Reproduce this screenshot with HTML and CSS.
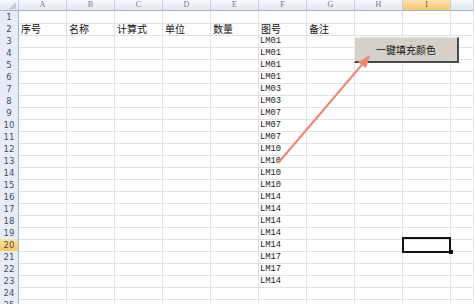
FILE: index.html
```html
<!DOCTYPE html>
<html lang="zh">
<head>
<meta charset="utf-8">
<title>Sheet</title>
<link rel="stylesheet" href="styles.css">
</head>
<body>
<div class="sheet">
  <div class="row head">
    <div class="corner"><span class="tri"></span></div><div>A</div><div>B</div><div>C</div><div>D</div><div>E</div><div>F</div><div>G</div><div>H</div><div class="sel">I</div><div></div>
  </div>
  <div class="row"><div class="rh">1</div><div></div><div></div><div></div><div></div><div></div><div></div><div></div><div></div><div></div><div></div></div>
  <div class="row"><div class="rh">2</div><div class="zh">序号</div><div class="zh">名称</div><div class="zh">计算式</div><div class="zh">单位</div><div class="zh">数量</div><div class="zh">图号</div><div class="zh">备注</div><div></div><div></div><div></div></div>
  <div class="row"><div class="rh">3</div><div></div><div></div><div></div><div></div><div></div><div class="m">LM01</div><div></div><div></div><div></div><div></div></div>
  <div class="row"><div class="rh">4</div><div></div><div></div><div></div><div></div><div></div><div class="m">LM01</div><div></div><div></div><div></div><div></div></div>
  <div class="row"><div class="rh">5</div><div></div><div></div><div></div><div></div><div></div><div class="m">LM01</div><div></div><div></div><div></div><div></div></div>
  <div class="row"><div class="rh">6</div><div></div><div></div><div></div><div></div><div></div><div class="m">LM01</div><div></div><div></div><div></div><div></div></div>
  <div class="row"><div class="rh">7</div><div></div><div></div><div></div><div></div><div></div><div class="m">LM03</div><div></div><div></div><div></div><div></div></div>
  <div class="row"><div class="rh">8</div><div></div><div></div><div></div><div></div><div></div><div class="m">LM03</div><div></div><div></div><div></div><div></div></div>
  <div class="row"><div class="rh">9</div><div></div><div></div><div></div><div></div><div></div><div class="m">LM07</div><div></div><div></div><div></div><div></div></div>
  <div class="row"><div class="rh">10</div><div></div><div></div><div></div><div></div><div></div><div class="m">LM07</div><div></div><div></div><div></div><div></div></div>
  <div class="row"><div class="rh">11</div><div></div><div></div><div></div><div></div><div></div><div class="m">LM07</div><div></div><div></div><div></div><div></div></div>
  <div class="row"><div class="rh">12</div><div></div><div></div><div></div><div></div><div></div><div class="m">LM10</div><div></div><div></div><div></div><div></div></div>
  <div class="row"><div class="rh">13</div><div></div><div></div><div></div><div></div><div></div><div class="m">LM10</div><div></div><div></div><div></div><div></div></div>
  <div class="row"><div class="rh">14</div><div></div><div></div><div></div><div></div><div></div><div class="m">LM10</div><div></div><div></div><div></div><div></div></div>
  <div class="row"><div class="rh">15</div><div></div><div></div><div></div><div></div><div></div><div class="m">LM10</div><div></div><div></div><div></div><div></div></div>
  <div class="row"><div class="rh">16</div><div></div><div></div><div></div><div></div><div></div><div class="m">LM14</div><div></div><div></div><div></div><div></div></div>
  <div class="row"><div class="rh">17</div><div></div><div></div><div></div><div></div><div></div><div class="m">LM14</div><div></div><div></div><div></div><div></div></div>
  <div class="row"><div class="rh">18</div><div></div><div></div><div></div><div></div><div></div><div class="m">LM14</div><div></div><div></div><div></div><div></div></div>
  <div class="row"><div class="rh">19</div><div></div><div></div><div></div><div></div><div></div><div class="m">LM14</div><div></div><div></div><div></div><div></div></div>
  <div class="row"><div class="rh sel">20</div><div></div><div></div><div></div><div></div><div></div><div class="m">LM14</div><div></div><div></div><div class="active"></div><div></div></div>
  <div class="row"><div class="rh">21</div><div></div><div></div><div></div><div></div><div></div><div class="m">LM17</div><div></div><div></div><div></div><div></div></div>
  <div class="row"><div class="rh">22</div><div></div><div></div><div></div><div></div><div></div><div class="m">LM17</div><div></div><div></div><div></div><div></div></div>
  <div class="row"><div class="rh">23</div><div></div><div></div><div></div><div></div><div></div><div class="m">LM14</div><div></div><div></div><div></div><div></div></div>
  <div class="row"><div class="rh">24</div><div></div><div></div><div></div><div></div><div></div><div></div><div></div><div></div><div></div><div></div></div>
  <div class="row"><div class="rh">25</div><div></div><div></div><div></div><div></div><div></div><div></div><div></div><div></div><div></div><div></div></div>

  <button class="fill-btn">一键填充颜色</button>
  <svg class="arrow" width="474" height="304" viewBox="0 0 474 304">
    <line x1="279" y1="162" x2="366" y2="60" stroke="#ef8575" stroke-width="2" stroke-linecap="round"/>
    <polygon points="370,55 358,62 366,68" fill="#ef8575"/>
  </svg>
</div>
</body>
</html>
```

FILE: styles.css
```css
html, body {
  margin: 0;
  padding: 0;
  background: #ffffff;
  overflow: hidden;
}

.sheet {
  position: relative;
  width: 474px;
  height: 304px;
  overflow: hidden;
  font-family: "Noto Sans CJK SC", "Noto Sans", sans-serif;
}

.row {
  display: grid;
  grid-template-columns: 19px repeat(9, 48px) 1fr;
  height: 12px;
}

.row > div {
  box-sizing: border-box;
  border-right: 1px solid #e0e2e4;
  border-bottom: 1px solid #e0e2e4;
  overflow: visible;
  white-space: nowrap;
}

.row.head {
  height: 11px;
}

.row.head > div {
  background: linear-gradient(#f7f9fc, #e1e7f0);
  border-right: 1px solid #c5d0de;
  border-bottom: 1px solid #9eb6ce;
  color: #6a7a8c;
  font-family: "Liberation Serif", serif;
  font-size: 8px;
  line-height: 10px;
  text-align: center;
}

.row.head > div.sel {
  background: linear-gradient(#fbe3b2, #f4c66e);
  color: #6a5a3a;
}

.corner {
  position: relative;
}

.tri {
  position: absolute;
  right: 2px;
  bottom: 1px;
  width: 0;
  height: 0;
  border-left: 7px solid transparent;
  border-bottom: 7px solid #c3cdd9;
}

.row > .rh {
  background: #e6edf6;
  border-right: 1px solid #9eb6ce;
  border-bottom: 1px solid #f4f7fb;
  color: #3e4e62;
  font-family: "DejaVu Sans", sans-serif;
  font-size: 8.5px;
  line-height: 12px;
  text-align: center;
}

.row > .rh.sel {
  background: linear-gradient(#fbe0a8, #f5c76c);
  color: #5a4a2a;
}

.zh {
  font-size: 10px;
  line-height: 12px;
  padding-left: 2px;
  color: #111;
}

.m {
  font-family: "Liberation Mono", monospace;
  font-size: 8.8px;
  line-height: 12px;
  padding-left: 1px;
  color: #222;
}

.active {
  position: relative;
}

.active::after {
  content: "";
  position: absolute;
  left: -1px;
  top: -2px;
  right: -1px;
  bottom: -2px;
  border: 2px solid #111;
}

.active::before {
  content: "";
  position: absolute;
  right: -3px;
  bottom: -3px;
  width: 4px;
  height: 4px;
  background: #111;
  z-index: 1;
}

.fill-btn {
  position: absolute;
  left: 354px;
  top: 37px;
  width: 105px;
  height: 26px;
  box-sizing: border-box;
  margin: 0;
  padding: 0;
  background: #d5d1c9;
  border-top: 1px solid #ebe9e4;
  border-left: 1px solid #ebe9e4;
  border-right: 2px solid #4a4a4a;
  border-bottom: 2px solid #4a4a4a;
  font-family: "Noto Sans CJK SC", sans-serif;
  font-size: 10px;
  line-height: 20px;
  color: #111;
  text-align: center;
}

.arrow {
  position: absolute;
  left: 0;
  top: 0;
  pointer-events: none;
}
```
